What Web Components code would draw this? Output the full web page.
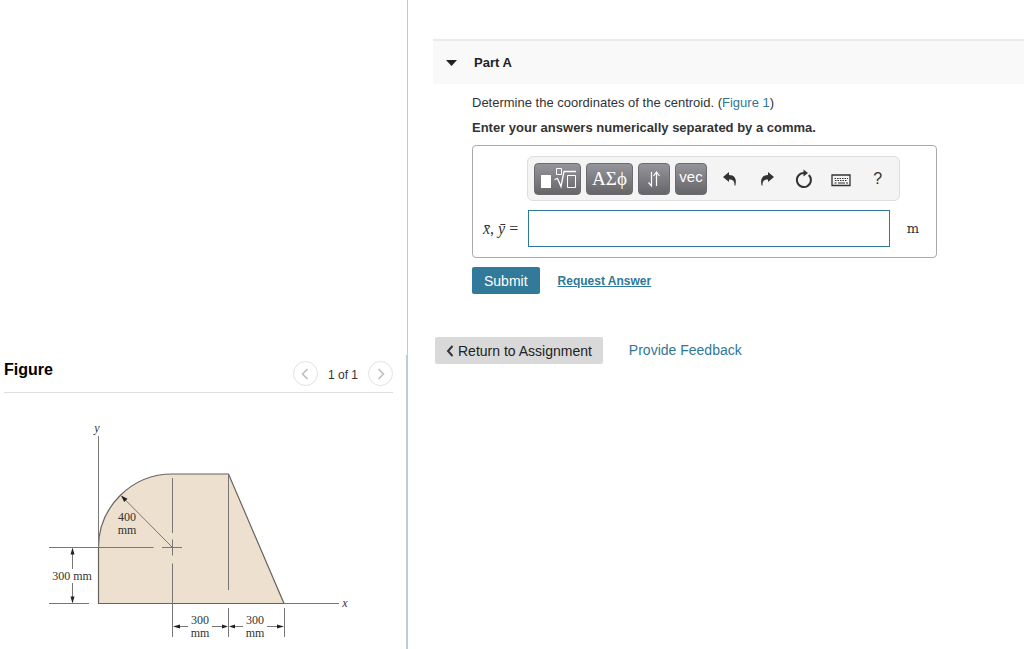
<!DOCTYPE html>
<html lang="en">
<head>
<meta charset="utf-8">
<meta name="viewport" content="width=device-width, initial-scale=1">
<title>Part A</title>
<style>
  body {
    margin: 0;
    background: #fff;
    color: #333;
    font-family: "Liberation Sans", Arial, sans-serif;
    font-size: 13px;
  }
</style>
</head>
<body>
<assignment-page>
  <figure-panel slot="figure" heading="Figure" position="1 of 1">
    <centroid-figure></centroid-figure>
  </figure-panel>
  <part-section slot="question" heading="Part A">
    <answer-form></answer-form>
  </part-section>
  <page-actions slot="question"></page-actions>
</assignment-page>

<script>
class AssignmentPage extends HTMLElement {
  constructor() {
    super();
    this.attachShadow({ mode: 'open' });
    this.shadowRoot.innerHTML = `
      <style>
        :host {
          display: grid;
          grid-template-columns: 408px minmax(0, 1fr);
          min-height: 100vh;
        }
        .left {
          display: grid;
          grid-template-rows: 355px 1fr;
        }
        .intro { border-right: 1px solid #bccbdc; }
        main {
          display: flex;
          flex-direction: column;
          padding: 39px 0 0 25px;
        }
      </style>
      <div class="left">
        <div class="intro"></div>
        <slot name="figure"></slot>
      </div>
      <main><slot name="question"></slot></main>
    `;
  }
}

class FigurePanel extends HTMLElement {
  constructor() {
    super();
    this.attachShadow({ mode: 'open' });
  }

  connectedCallback() {
    this.shadowRoot.innerHTML = `
      <style>
        :host {
          display: block;
          padding: 0 13px 0 4px;
          border-right: 2px solid #bccbdc;
        }
        header {
          display: flex;
          align-items: center;
          justify-content: space-between;
          height: 37px;
          border-bottom: 1px solid #ddd;
        }
        h2 {
          margin: 0;
          padding-bottom: 8px;
          color: #000;
          font-size: 16px;
          line-height: 20px;
        }
        nav {
          display: flex;
          align-items: center;
          gap: 10px;
        }
        span {
          padding-top: 2px;
          font-size: 12px;
          line-height: 18px;
        }
        button {
          display: grid;
          place-items: center;
          width: 25px;
          height: 25px;
          padding: 0;
          border: 1px solid #e2e2e2;
          border-radius: 50%;
          background: #fff;
        }
        path {
          fill: none;
          stroke: #bbb;
          stroke-width: 1.5;
        }
      </style>
      <header>
        <h2>${this.getAttribute('heading')}</h2>
        <nav aria-label="Figures">
          <button type="button" aria-label="Previous figure">
            <svg width="12" height="12" viewBox="0 0 12 12"><path d="M8.5 1 3.5 6l5 5"/></svg>
          </button>
          <span>${this.getAttribute('position')}</span>
          <button type="button" aria-label="Next figure">
            <svg width="12" height="12" viewBox="0 0 12 12"><path d="M3.5 1l5 5-5 5"/></svg>
          </button>
        </nav>
      </header>
      <slot></slot>
    `;
  }
}

class CentroidFigure extends HTMLElement {
  constructor() {
    super();
    this.attachShadow({ mode: 'open' });
    this.shadowRoot.innerHTML = `
      <style>
        :host { display: block; }
        svg {
          display: block;
          width: 100%;
        }
        .area { fill: #ede0ce; stroke: #66635f; stroke-width: 1.2; }
        .line { fill: none; stroke: #777; stroke-width: 1; }
        .arrow { fill: #222; }
        text {
          fill: #333;
          font-family: "Liberation Serif", "Times New Roman", serif;
          font-size: 12px;
          text-anchor: middle;
        }
        .axis { font-style: italic; }
      </style>
      <svg viewBox="4 393 389 256" role="img" aria-label="Composite area with its dimensions">
        <path class="area" d="M98.5 603.5V547.5A74 73.5 0 0 1 172.5 474H228.5L284 603.5Z"/>
        <!-- axes -->
        <path class="line" d="M98.5 436V547M284 603.5H339"/>
        <!-- centre lines and extension lines -->
        <path class="line" d="M172.5 478V533M172.5 539.5V555.5M172.5 563.5V637M162 547.5H182M228.5 475V590M228.5 608V637M284.5 608V637"/>
        <path class="line" d="M49 547.5H153.5M49 603.5H89"/>
        <!-- dimension lines -->
        <path class="line" d="M122 496.5 172.5 547.5M72.5 550V569M72.5 583V601M175 626.5H188M212 626.5H226M231 626.5H243M267 626.5H281"/>
        <path class="arrow" d="M121 495.5 127.5 498.7 124.2 502ZM72.5 547.5l2 7h-4zM72.5 603.5l2-7h-4zM173 626.5l7-2v4zM228 626.5l-6-2v4zM229 626.5l6-2v4zM284 626.5l-7-2v4z"/>
        <text class="axis" x="97" y="432">y</text>
        <text class="axis" x="345" y="607">x</text>
        <text x="127" y="521">400</text>
        <text x="127" y="534">mm</text>
        <text x="72" y="580">300 mm</text>
        <text x="200" y="624">300</text>
        <text x="200" y="637">mm</text>
        <text x="255" y="624">300</text>
        <text x="255" y="637">mm</text>
      </svg>
    `;
  }
}

class PartSection extends HTMLElement {
  constructor() {
    super();
    this.attachShadow({ mode: 'open' });
  }

  connectedCallback() {
    this.shadowRoot.innerHTML = `
      <style>
        :host { display: block; }
        header {
          display: flex;
          align-items: center;
          height: 43px;
          padding-left: 13px;
          border-top: 2px solid #ebebeb;
          background: #f9f9f9;
        }
        button {
          display: flex;
          align-items: center;
          gap: 16px;
          padding: 0;
          border: 0;
          background: none;
          color: #222;
          font: bold 13px/18px "Liberation Sans", Arial, sans-serif;
        }
        h2 { margin: 0; font: inherit; }
        .body { padding: 10px 16px 0 39px; }
      </style>
      <header>
        <h2>
          <button type="button" aria-expanded="true">
            <svg width="12" height="6" viewBox="0 0 12 6"><path d="M0 0h11L5.5 6z" fill="#222"/></svg>
            ${this.getAttribute('heading')}
          </button>
        </h2>
      </header>
      <div class="body"><slot></slot></div>
    `;
  }
}

class MathToolbar extends HTMLElement {
  constructor() {
    super();
    this.attachShadow({ mode: 'open' });
    this.shadowRoot.innerHTML = `
      <style>
        :host {
          display: flex;
          align-items: center;
          box-sizing: border-box;
          height: 45px;
          padding: 0 3px 0 6px;
          border: 1px solid #ddd;
          border-radius: 6px;
          background: #f4f4f4;
        }
        button {
          display: grid;
          place-items: center;
          box-sizing: border-box;
          height: 32px;
          padding: 0;
          border: 0;
          color: #333;
          background: none;
          font: 16px/18px "Liberation Sans", Arial, sans-serif;
        }
        .keys {
          display: flex;
          gap: 5px;
          margin-right: 5px;
        }
        .keys button {
          width: 32px;
          border: 1px solid #6c6c70;
          border-radius: 4px;
          background: linear-gradient(#94949b, #66666a);
          color: #fff;
        }
        .keys .wide { width: 47px; }
        .keys .greek { font: 19px/20px "Liberation Serif", "Times New Roman", serif; }
        .keys .vec { padding-bottom: 3px; font-size: 15px; }
        .tools {
          flex: 1;
          display: grid;
          grid-template-columns: repeat(5, 1fr);
        }
      </style>
      <div class="keys">
        <button type="button" class="wide" aria-label="Templates">
          <svg width="38" height="24" viewBox="1 0 38 24" fill="none" stroke="#fff">
            <path d="M3 8h10v13H3z" fill="#fff" stroke="none"/>
            <path d="M18.5 1.500h5v6h-5zM29.500 8.500h8v12h-8z"/>
            <path d="M16.500 12.500l3-1 3.500 8L26 4.500h12" stroke-width="1.300"/>
          </svg>
        </button>
        <button type="button" class="wide greek">ΑΣϕ</button>
        <button type="button" aria-label="Subscript and superscript">
          <svg width="16" height="18" viewBox="0 0 16 18" fill="none" stroke="#fff" stroke-width="1.200">
            <path d="M5.500 2v14M2.500 12.500l3 3.500V12M10.500 16V2M7.500 6l3-4 3 4"/>
          </svg>
        </button>
        <button type="button" class="vec">vec</button>
      </div>
      <div class="tools">
        <button type="button" aria-label="Undo">
          <svg width="16" height="16" viewBox="0 0 16 16">
            <path d="M1 6 7 1v3c5 0 8 3 6.500 10-.2 1-1 1-1 0C12.500 10 11 8.500 7 8.500V11z" fill="#333"/>
          </svg>
        </button>
        <button type="button" aria-label="Redo">
          <svg width="16" height="16" viewBox="0 0 16 16">
            <path d="M15 6 9 1v3C4 4 1 7 2.500 14c.2 1 1 1 1 0C3.500 10 5 8.500 9 8.500V11z" fill="#333"/>
          </svg>
        </button>
        <button type="button" aria-label="Reset">
          <svg width="18" height="20" viewBox="0 0 18 20">
            <path d="M9 4A7 7 0 1 0 13.800 6" fill="none" stroke="#333" stroke-width="2"/>
            <path d="M8.500 .5v7L13 4z" fill="#333"/>
          </svg>
        </button>
        <button type="button" aria-label="Keyboard shortcuts">
          <svg width="20" height="18" viewBox="0 0 20 18" fill="none" stroke="#333">
            <path d="M1 5h18v10.500H1z" stroke-width="1.300"/>
            <path d="M3.500 8.500h13.500" stroke-dasharray="1.500 1"/>
            <path d="M4 10.500h12.500" stroke-dasharray="1.500 1"/>
            <path d="M3.500 13h2M7 13h7M15 13h2"/>
          </svg>
        </button>
        <button type="button" aria-label="Help">?</button>
      </div>
    `;
  }
}

class AnswerForm extends HTMLElement {
  constructor() {
    super();
    this.attachShadow({ mode: 'open' });
    this.shadowRoot.innerHTML = `
      <style>
        :host { display: block; }
        p {
          margin: 0 0 7px;
          line-height: 18px;
          font-size: 13px;
        }
        a { color: #2f7896; }
        p a { text-decoration: none; }
        .box {
          display: grid;
          grid-template-columns: 55px minmax(0, 1fr) 46px;
          row-gap: 9px;
          align-items: center;
          align-content: end;
          box-sizing: border-box;
          max-width: 465px;
          height: 113px;
          margin-top: 8px;
          padding-bottom: 10px;
          border: 1px solid #aaa;
          border-radius: 4px;
        }
        math-toolbar {
          grid-column: 2;
          margin: 0 -10px 0 -1px;
        }
        label {
          grid-column: 1;
          padding-left: 10px;
          font: 16px/20px "Liberation Serif", "Times New Roman", serif;
          white-space: nowrap;
        }
        input {
          box-sizing: border-box;
          width: 100%;
          height: 37px;
          padding: 0 8px;
          border: 1px solid #2f7896;
          background: #fff;
          font: inherit;
        }
        .unit {
          text-align: center;
          font: 13px/20px "DejaVu Serif", serif;
        }
        .buttons {
          display: flex;
          align-items: center;
          gap: 18px;
          margin-top: 9px;
        }
        .buttons button {
          height: 27px;
          padding: 0 12px;
          border: 0;
          border-radius: 2px;
          background: #317a99;
          color: #fff;
          font: 14px/18px "Liberation Sans", Arial, sans-serif;
        }
        .buttons a { font-size: 12px; font-weight: bold; }
      </style>
      <p>Determine the coordinates of the centroid. (<a href="#figure">Figure 1</a>)</p>
      <p><b>Enter your answers numerically separated by a comma.</b></p>
      <form onsubmit="return false">
        <div class="box">
          <math-toolbar></math-toolbar>
          <label for="answer"><i>x̄</i>, <i>ȳ</i> =</label>
          <input id="answer" type="text" autocomplete="off">
          <span class="unit">m</span>
        </div>
        <div class="buttons">
          <button type="submit">Submit</button>
          <a href="#request">Request Answer</a>
        </div>
      </form>
    `;
  }
}

class PageActions extends HTMLElement {
  constructor() {
    super();
    this.attachShadow({ mode: 'open' });
    this.shadowRoot.innerHTML = `
      <style>
        :host {
          display: flex;
          align-items: center;
          gap: 26px;
          padding: 43px 0 0 2px;
          font-size: 14px;
        }
        button {
          display: flex;
          align-items: center;
          gap: 4px;
          height: 27px;
          padding: 0 11px;
          border: 0;
          border-radius: 2px;
          background: #d9d9d9;
          color: #222;
          font: inherit;
        }
        a {
          padding-bottom: 2px;
          color: #2f7896;
          text-decoration: none;
        }
      </style>
      <button type="button">
        <svg width="8" height="12" viewBox="0 0 8 12"><path d="M6.5 1 2 6l4.500 5" fill="none" stroke="#333" stroke-width="2"/></svg>
        Return to Assignment
      </button>
      <a href="#feedback">Provide Feedback</a>
    `;
  }
}

customElements.define('assignment-page', AssignmentPage);
customElements.define('figure-panel', FigurePanel);
customElements.define('centroid-figure', CentroidFigure);
customElements.define('part-section', PartSection);
customElements.define('math-toolbar', MathToolbar);
customElements.define('answer-form', AnswerForm);
customElements.define('page-actions', PageActions);
</script>
</body>
</html>
